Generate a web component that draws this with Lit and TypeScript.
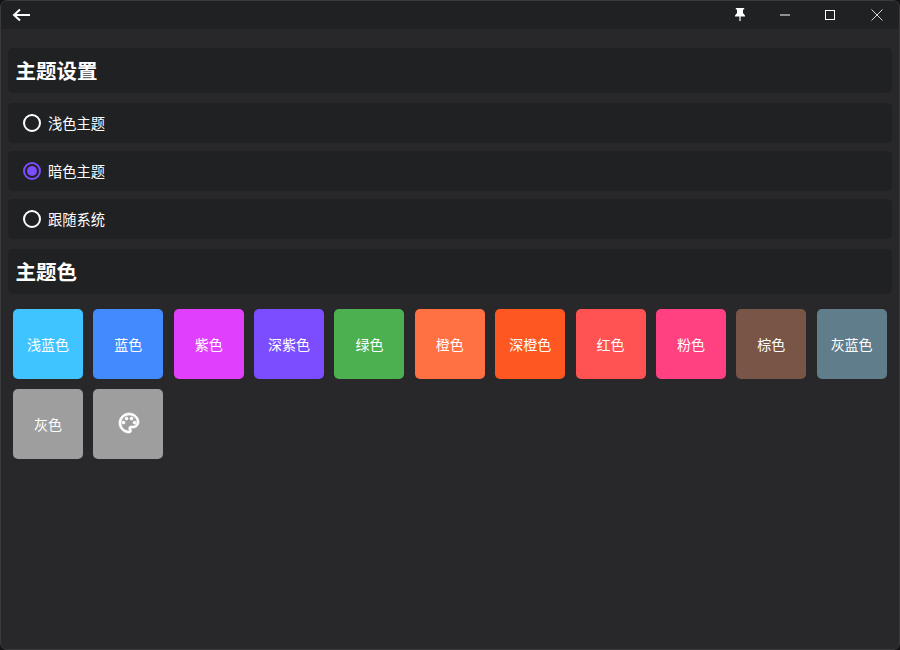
import { LitElement, html, css, svg } from "lit";
import { customElement } from "lit/decorators.js";

const SWATCHES: [string, string][] = [
  ["浅蓝色", "#40c4ff"], ["蓝色", "#448aff"], ["紫色", "#e040fb"], ["深紫色", "#7c4dff"],
  ["绿色", "#4caf50"], ["橙色", "#ff7043"], ["深橙色", "#ff5722"], ["红色", "#ff5252"],
  ["粉色", "#ff4081"], ["棕色", "#795548"], ["灰蓝色", "#607d8b"], ["灰色", "#9e9e9e"],
];

@customElement("app-root")
export class AppRoot extends LitElement {
  static styles = css`
    :host {
      display: block;
      width: 900px;
      height: 650px;
      background: #141416;
      font-family: "Noto Sans CJK SC", "Liberation Sans", sans-serif;
      color: #fff;
    }
    .window {
      box-sizing: border-box;
      height: 650px;
      background: #28282a;
      border: 1px solid #3a3a3c;
      border-radius: 7px;
      overflow: hidden;
      display: flex;
      flex-direction: column;
    }
    .titlebar {
      height: 28px;
      flex: none;
      background: #1f2123;
      display: flex;
      align-items: center;
      justify-content: space-between;
    }
    .back { display: block; margin-left: 11px; margin-top: -1px; }
    .controls { display: flex; align-items: flex-start; height: 28px; }
    .ctl {
      width: 45px;
      height: 27px;
      display: flex;
      align-items: center;
      justify-content: center;
    }
    .ctl:last-child { margin-left: 2px; }
    .content {
      padding: 19px 7px 0;
      display: flex;
      flex-direction: column;
    }
    .card {
      background: #1f2123;
      border-radius: 5px;
    }
    .heading {
      height: 45px;
      box-sizing: border-box;
      padding-left: 7.5px;
      display: flex;
      align-items: center;
      font-size: 20.5px;
      font-weight: 700;
      line-height: 1;
    }
    .radios {
      display: flex;
      flex-direction: column;
      gap: 8px;
      margin: 10px 0;
    }
    .radio {
      height: 40px;
      display: flex;
      align-items: center;
      padding-left: 15px;
      font-size: 14.25px;
      gap: 7px;
    }
    .label { position: relative; top: -1px; }
    .dot {
      box-sizing: border-box;
      width: 18px;
      height: 18px;
      border: 2px solid #fff;
      border-radius: 50%;
      display: flex;
      align-items: center;
      justify-content: center;
      flex: none;
    }
    .dot.on { border-color: #7c4dff; }
    .dot.on::after {
      content: "";
      width: 10px;
      height: 10px;
      border-radius: 50%;
      background: #7c4dff;
    }
    .grid {
      margin: 15px 5px 0;
      display: grid;
      grid-template-columns: repeat(11, 1fr);
      gap: 10px;
    }
    .tile {
      width: 70px;
      height: 70px;
      border-radius: 5px;
      display: flex;
      align-items: center;
      justify-content: center;
      font-size: 14px;
      white-space: nowrap;
    }
    .grey { background: #9e9e9e; }
    .palette { stroke: #fff; stroke-width: 0.7; margin-left: 1px; margin-top: -2px; }
  `;

  private radio(label: string, on = false) {
    return html`<div class="card radio"><span class="dot ${on ? "on" : ""}"></span><span class="label">${label}</span></div>`;
  }

  private swatch(label: string, color: string) {
    return html`<div class="tile" style="background:${color}">${label}</div>`;
  }

  render() {
    return html`
      <div class="window">
        <div class="titlebar">
          <svg class="back" width="20" height="14" viewBox="0 0 20 14" fill="none" stroke="#fff" stroke-width="2">
            <path d="M18 7H2M8 1.5 2 7l6 5.5" />
          </svg>
          <div class="controls">
            <div class="ctl">
              <svg width="10" height="13" viewBox="0 0 10 13" fill="#fff">
                <path d="M.8 0h8.4v1.5H8v3.6L10 7.4v1.2H5.6V13H4.4V8.6H0V7.4l2-2.3V1.5H.8z" />
              </svg>
            </div>
            <div class="ctl">
              <svg width="10" height="2" viewBox="0 0 10 2"><path d="M0 1h10" stroke="#fff" stroke-width="1" /></svg>
            </div>
            <div class="ctl">
              <svg width="10" height="10" viewBox="0 0 10 10" fill="none"><rect x=".5" y=".5" width="9" height="9" stroke="#fff" /></svg>
            </div>
            <div class="ctl">
              <svg width="12" height="12" viewBox="0 0 12 12" fill="none"><path d="M.5.5l11 11M11.5.5l-11 11" stroke="#d8d8d8" /></svg>
            </div>
          </div>
        </div>
        <div class="content">
          <div class="card heading">主题设置</div>
          <div class="radios">
            ${this.radio("浅色主题")}
            ${this.radio("暗色主题", true)}
            ${this.radio("跟随系统")}
          </div>
          <div class="card heading">主题色</div>
          <div class="grid">
            ${SWATCHES.map(([l, c]) => this.swatch(l, c))}
            <div class="tile grey">
              <svg class="palette" width="24" height="24" viewBox="0 0 24 24" fill="#fff">
                ${svg`<path d="M12 22C6.49 22 2 17.51 2 12S6.49 2 12 2s10 4.04 10 9c0 3.31-2.69 6-6 6h-1.77c-.28 0-.5.22-.5.5 0 .12.05.23.13.33.41.47.64 1.06.64 1.67A2.5 2.5 0 0 1 12 22zm0-18c-4.41 0-8 3.59-8 8s3.59 8 8 8c.28 0 .5-.22.5-.5a.54.54 0 0 0-.14-.35c-.41-.46-.63-1.05-.63-1.65a2.5 2.5 0 0 1 2.5-2.5H16c2.21 0 4-1.79 4-4 0-3.86-3.59-7-8-7z"/>
                <circle cx="6.5" cy="11.5" r="1.5"/><circle cx="9.5" cy="7.5" r="1.5"/><circle cx="14.5" cy="7.5" r="1.5"/><circle cx="17.5" cy="11.5" r="1.5"/>`}
              </svg>
            </div>
          </div>
        </div>
      </div>
    `;
  }
}
